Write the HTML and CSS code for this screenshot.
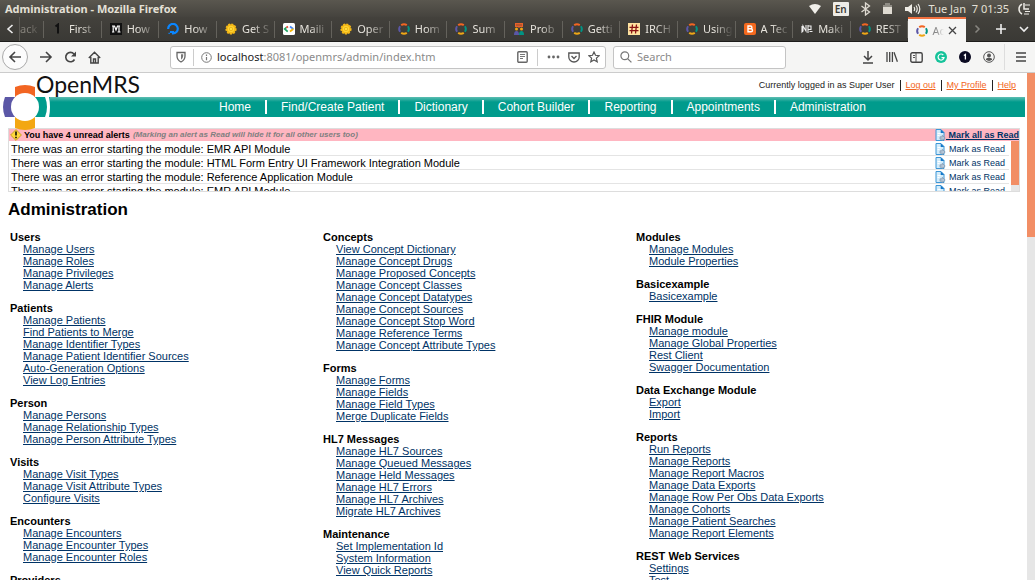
FILE: index.html
```html
<!DOCTYPE html>
<html lang="en">
<head>
<meta charset="utf-8">
<title>Administration - Mozilla Firefox</title>
<link rel="stylesheet" href="styles.css">
</head>
<body>
<svg class="defs" aria-hidden="true">
  <symbol id="omrs" viewBox="0 0 12 12"><g fill="none" stroke-width="2"><path d="M3.2 2.1Q6 .2 8.8 2.1" stroke="#f26522"/><path d="M9.9 3.2Q11.8 6 9.9 8.8" stroke="#009384"/><path d="M8.8 9.9Q6 11.8 3.2 9.9" stroke="#eea616"/><path d="M2.1 8.8Q.2 6 2.1 3.2" stroke="#5b57a6"/></g></symbol>
  <symbol id="sun" viewBox="0 0 12 12"><circle cx="6" cy="6" r="4.8" fill="#f5b918" stroke="#f5b918" stroke-width="1.6" stroke-dasharray="2 1.2"/><circle cx="6" cy="6" r="3" fill="#ffdf3d"/><circle cx="6" cy="6" r="1.8" fill="none" stroke="#e8a50c" stroke-width=".8"/></symbol>
  <symbol id="doc" viewBox="0 0 11 12"><path d="M1 .5h5l3 3v8H1z" fill="#d3ecfb" stroke="#3d96d6"/><path d="M5.700.3v3.700h3.700z" fill="#1478c8"/><path d="M2.500 4.500h3M2.500 6.500h2" stroke="#fff"/><path d="M5 7.800h2.200V6.300l3 2.700-3 2.700v-1.500H5z" fill="#b4c6d8" stroke="#7f94aa" stroke-width=".7"/></symbol>
</svg>

<header class="titlebar">
  <span class="window-title">Administration - Mozilla Firefox</span>
  <div class="tray">
    <svg width="14" height="12" viewBox="0 0 14 12"><path d="M1 3Q7-1 13 3L7 11z" fill="#f1efea"/></svg>
    <span class="lang">En</span>
    <svg width="11" height="14" viewBox="0 0 11 14"><path d="M1.5 4l8 6L5.5 13V1l4 3-8 6" fill="none" stroke="#dfdbd2" stroke-width="1.3"/></svg>
    <svg width="11" height="13" viewBox="0 0 11 13"><path d="M3 1h5v2h2v9H1V3h2z" fill="#8f8c84"/><path d="M1 5h9v7H1z" fill="#dfdbd2"/></svg>
    <svg width="17" height="12" viewBox="0 0 17 12"><path d="M1 4h3l4-3v10L4 8H1z" fill="#eeece6"/><path d="M10 4q1.4 2 0 4M12 2.5q2.5 3.500 0 7M14 1q3.600 5 0 10" fill="none" stroke="#eeece6" stroke-width="1.2"/></svg>
    <time>Tue Jan&nbsp; 7 01:35</time>
    <svg width="14" height="14" viewBox="0 0 14 14" fill="none" stroke="#eeece6" stroke-width="1.5"><path d="M5 2.200A5.500 5.500 0 0 0 5 12M7 1v6h5"/><path d="M8 3h5M8 9.500h5M7 12h5" stroke-width="1.200"/></svg>
  </div>
</header>

<nav class="tabs" aria-label="Tabs">
  <button class="scroll" aria-label="Scroll left"><svg width="8" height="10" viewBox="0 0 8 10"><path d="M6.500 1L2 5l4.500 4" fill="none" stroke="#eee" stroke-width="1.600"/></svg></button>
  <button class="tab cut"><span>ack</span></button>
  <button class="tab"><svg width="12" height="12" viewBox="0 0 12 12"><path d="M3.500 3.500L6 1.500v9" fill="none" stroke="#111" stroke-width="2"/></svg><span>First</span></button>
  <button class="tab"><svg width="12" height="12" viewBox="0 0 12 12"><path d="M0 0h12v12H0z" fill="#111"/><path d="M2 3h2.500L6 7l1.500-4H10M3.200 3v6M9 3v6M2 9h2.400M7.500 9h3" fill="none" stroke="#fff" stroke-width="1.200"/></svg><span>How</span></button>
  <button class="tab"><svg width="12" height="12" viewBox="0 0 12 12"><path d="M1.200 6A4.800 4.800 0 1 1 6 10.500V8" fill="none" stroke="#0a86ff" stroke-width="2.200"/><path d="M3 8h2v2H3zM1.500 9.800h1.300v1.300H1.500z" fill="#0a86ff"/></svg><span>How</span></button>
  <button class="tab"><svg width="12" height="12"><use href="#sun"/></svg><span>Get S</span></button>
  <button class="tab"><svg width="12" height="12" viewBox="0 0 12 12"><rect width="12" height="12" rx="1.500" fill="#fff"/><g fill="none" stroke-width="1.700"><path d="M5 3.500L3.200 4.800" stroke="#e54c37"/><path d="M3.200 4.500L1.700 6l3 2.600" stroke="#1aa260"/><path d="M7 3.500L10.300 6" stroke="#4285f4"/><path d="M10.300 6L7 8.500" stroke="#f4b400"/></g></svg><span>Maili</span></button>
  <button class="tab"><svg width="12" height="12"><use href="#sun"/></svg><span>Oper</span></button>
  <button class="tab"><svg width="12" height="12"><use href="#omrs"/></svg><span>Hom</span></button>
  <button class="tab"><svg width="12" height="12"><use href="#omrs"/></svg><span>Sum</span></button>
  <button class="tab"><svg width="12" height="12" viewBox="0 0 12 12"><path d="M2 0h8v4H7L6 5 5 4H2z" fill="#e8622b"/><path d="M3.500 2h1M5.500 2h1M7.500 2h1" stroke="#333"/><circle cx="3.500" cy="6" r="1.500" fill="#eea616"/><circle cx="8.500" cy="6" r="1.500" fill="#eea616"/><path d="M1 12q0-4 2.500-4T6 12z" fill="#5b57a6"/><path d="M6 12q0-4 2.500-4t2.500 4z" fill="#009384"/></svg><span>Prob</span></button>
  <button class="tab"><svg width="12" height="12"><use href="#omrs"/></svg><span>Getti</span></button>
  <button class="tab"><svg width="12" height="12" viewBox="0 0 12 12"><path d="M0 0h12v12H0z" fill="#ffe3a0"/><path d="M4.500 1.500l-1 9M8.500 1.500l-1 9M1.500 4.300h9M1.500 7.700h9" stroke="#8a1212" stroke-width="1.300"/></svg><span>IRCH</span></button>
  <button class="tab"><svg width="12" height="12"><use href="#omrs"/></svg><span>Using</span></button>
  <button class="tab"><svg width="12" height="12" viewBox="0 0 12 12"><rect width="12" height="12" rx="2" fill="#f4691e"/><path d="M4 3h2.500a1.400 1.400 0 0 1 0 2.800H4zM4 5.800h3a1.500 1.500 0 0 1 0 3H4z" fill="none" stroke="#fff" stroke-width="1.400"/></svg><span>A Tec</span></button>
  <button class="tab"><svg width="12" height="12" viewBox="0 0 12 12"><path d="M1 3v6l1-1V3l3 5V2M7 2v8M7 3h3v3.500H7M8.500 8.500h3" fill="none" stroke="#eee" stroke-width="1.100"/></svg><span>Maki</span></button>
  <button class="tab"><svg width="12" height="12"><use href="#omrs"/></svg><span>REST</span></button>
  <div class="tab active"><svg width="12" height="12"><use href="#omrs"/></svg><span>Ad</span><button class="close" aria-label="Close tab"><svg width="9" height="9" viewBox="0 0 9 9"><path d="M1 1l7 7M8 1L1 8" stroke="#444" stroke-width="1.300"/></svg></button></div>
  <button class="tool" aria-label="Scroll right"><svg width="7" height="10" viewBox="0 0 7 10"><path d="M1.500 1.500L5 5 1.500 8.500" fill="none" stroke="#888680" stroke-width="1.500"/></svg></button>
  <button class="tool" aria-label="New tab"><svg width="12" height="12" viewBox="0 0 12 12"><path d="M6 1v10M1 6h10" stroke="#eee" stroke-width="1.600"/></svg></button>
  <button class="tool" aria-label="List all tabs"><svg width="10" height="8" viewBox="0 0 10 8"><path d="M1 2l4 4 4-4" fill="none" stroke="#eee" stroke-width="1.600"/></svg></button>
</nav>

<div class="toolbar">
  <div class="history">
    <button class="back" aria-label="Back"><svg width="14" height="12" viewBox="0 0 14 12"><path d="M13 6H2M7 1L2 6l5 5" fill="none" stroke="#444" stroke-width="1.600"/></svg></button>
    <button aria-label="Forward"><svg width="14" height="12" viewBox="0 0 14 12"><path d="M1 6h11M7 1l5 5-5 5" fill="none" stroke="#444" stroke-width="1.600"/></svg></button>
    <button aria-label="Reload"><svg width="13" height="12" viewBox="0 0 13 12"><path d="M10.500 8.500A4.700 4.700 0 1 1 10 3" fill="none" stroke="#444" stroke-width="1.600"/><path d="M12 .5v5H7z" fill="#444"/></svg></button>
    <button aria-label="Home"><svg width="13" height="13" viewBox="0 0 13 13"><path d="M.8 7L6.500 1.300 12.200 7M2.800 6v6h7.400V6M5.500 12V8h2v4" fill="none" stroke="#444" stroke-width="1.400"/></svg></button>
  </div>
  <div class="urlbar">
    <svg width="10" height="12" viewBox="0 0 10 12"><path d="M1 1.500h8V5q0 4-4 6-4-2-4-6z" fill="none" stroke="#666" stroke-width="1.300"/><path d="M5 3.300h2.200V5q0 2.300-2.200 3.700z" fill="#777"/></svg>
    <i class="rule"></i>
    <svg width="11" height="11" viewBox="0 0 11 11"><circle cx="5.500" cy="5.500" r="4.800" fill="none" stroke="#777"/><path d="M5.500 5v3.200M5.500 2.600v1.300" stroke="#777" stroke-width="1.200"/></svg>
    <a class="address" href="#"><b>localhost</b>:8081/openmrs/admin/index.htm</a>
    <svg width="11" height="12" viewBox="0 0 11 12"><rect x=".8" y=".8" width="9.400" height="10.400" rx="1" fill="none" stroke="#666" stroke-width="1.400"/><path d="M3 3.500h5M3 5.500h5M3 7.500h3" stroke="#777"/></svg>
    <i class="rule wide"></i>
    <svg width="13" height="4" viewBox="0 0 13 4" fill="#666"><circle cx="2" cy="2" r="1.400"/><circle cx="6.500" cy="2" r="1.400"/><circle cx="11" cy="2" r="1.400"/></svg>
    <svg width="12" height="11" viewBox="0 0 12 11" fill="none" stroke="#555" stroke-width="1.300"><path d="M.8 1h10.400v4a5.200 5 0 0 1-10.400 0z"/><path d="M3.500 4L6 6.500 8.500 4"/></svg>
    <svg width="12" height="12" viewBox="0 0 12 12"><path d="M6 1l1.500 3.300 3.600.4-2.700 2.400.8 3.600L6 8.900l-3.200 1.800.8-3.600L.9 4.700l3.600-.4z" fill="none" stroke="#555" stroke-width="1.200"/></svg>
  </div>
  <label class="search">
    <svg width="12" height="12" viewBox="0 0 12 12"><circle cx="4.800" cy="4.800" r="3.900" fill="none" stroke="#777" stroke-width="1.200"/><path d="M7.600 7.600l3.800 3.800" stroke="#777" stroke-width="1.300"/></svg>
    <input type="text" placeholder="Search" aria-label="Search">
  </label>
  <div class="actions">
    <button aria-label="Downloads"><svg width="12" height="13" viewBox="0 0 12 13"><path d="M6 0v9M2 5l4 4 4-4M1 12h10" fill="none" stroke="#444" stroke-width="1.500"/></svg></button>
    <button aria-label="Library"><svg width="12" height="12" viewBox="0 0 12 12"><path d="M1 1v10M3.700 1v10M6.400 1v10M8 1.200l3.400 9.600" fill="none" stroke="#444" stroke-width="1.300"/></svg></button>
    <button aria-label="Sidebars"><svg width="13" height="11" viewBox="0 0 13 11"><rect x=".8" y=".8" width="11.400" height="9.400" rx="1.500" fill="none" stroke="#444" stroke-width="1.400"/><path d="M6 1v9M3 3.500h2M3 5.500h2" stroke="#555"/></svg></button>
    <button aria-label="Grammar checker"><svg width="12" height="12" viewBox="0 0 12 12"><circle cx="6" cy="6" r="6" fill="#15c39a"/><path d="M8.300 4A3 3 0 1 0 9 6.700H6.500" fill="none" stroke="#fff" stroke-width="1.200"/></svg></button>
    <button aria-label="Extension"><svg width="12" height="12" viewBox="0 0 12 12"><circle cx="6" cy="6" r="6" fill="#0b0b22"/><path d="M4.800 4.500L6.400 3.500v5" fill="none" stroke="#fff" stroke-width="1.300"/></svg></button>
    <button aria-label="Account"><svg width="12" height="12" viewBox="0 0 12 12"><circle cx="6" cy="6" r="5.300" fill="none" stroke="#555"/><circle cx="6" cy="4.500" r="2" fill="#555"/><path d="M2.800 8.800q0-2 3.200-2t3.200 2Q6 11 2.800 8.800" fill="#555"/></svg></button>
    <button class="menu" aria-label="Menu"><svg width="10" height="10" viewBox="0 0 10 10"><path d="M0 1h10M0 5h10M0 9h10" stroke="#444" stroke-width="1.500"/></svg></button>
  </div>
</div>

<div class="viewport">
<main class="page">
  <div class="banner">
    <nav class="mainnav" aria-label="Main"><a href="#">Home</a><a href="#">Find/Create Patient</a><a href="#">Dictionary</a><a href="#">Cohort Builder</a><a href="#">Reporting</a><a href="#">Appointments</a><a href="#">Administration</a></nav>
    <div class="brand">
      <svg class="mark" width="50" height="50" viewBox="0 0 50 50"><path d="M0 14h50v22H0z" fill="#fff"/><path d="M15 5q10-4 20 0v12H15z" fill="#f26522"/><path d="M15 34h20v12q-10 4-20 0z" fill="#f3a712"/><path d="M5 15h10v20H5q-4-10 0-20z" fill="#5b57a6"/><path d="M35 15h10q4 10 0 20H35z" fill="#009b8c"/><path d="M49 15h1v20h-1q2-10 0-20z" fill="#009b8c"/><circle cx="25" cy="25" r="14" fill="#fff"/></svg>
      <span class="wordmark">OpenMRS</span>
    </div>
    <div class="userbar"><span>Currently logged in as Super User</span><a href="#">Log out</a><a href="#">My Profile</a><a href="#">Help</a></div>
  </div>

  <section class="alerts">
    <div class="alerts-head">
      <svg width="12" height="12" viewBox="0 0 12 12"><path d="M6 .6L11.400 6 6 11.400.6 6z" fill="#ffd83b" stroke="#c9a227"/><path d="M6 2.500v4M6 7.700v1.500" stroke="#000" stroke-width="1.500"/></svg>
      <strong>You have 4 unread alerts</strong><em>(Marking an alert as Read will hide it for all other users too)</em>
      <a href="#"><svg width="11" height="12"><use href="#doc"/></svg> Mark all as Read</a>
    </div>
    <div class="alerts-body">
      <ul class="alert-list">
        <li><span>There was an error starting the module: EMR API Module</span><a href="#"><svg width="11" height="12"><use href="#doc"/></svg>Mark as Read</a></li>
        <li><span>There was an error starting the module: HTML Form Entry UI Framework Integration Module</span><a href="#"><svg width="11" height="12"><use href="#doc"/></svg>Mark as Read</a></li>
        <li><span>There was an error starting the module: Reference Application Module</span><a href="#"><svg width="11" height="12"><use href="#doc"/></svg>Mark as Read</a></li>
        <li><span>There was an error starting the module: EMR API Module</span><a href="#"><svg width="11" height="12"><use href="#doc"/></svg>Mark as Read</a></li>
      </ul>
      <div class="track"><div class="thumb small"></div></div>
    </div>
  </section>

  <h1>Administration</h1>
  <div class="columns">
    <div class="column">
      <section><h2>Users</h2><ul><li><a href="#">Manage Users</a></li><li><a href="#">Manage Roles</a></li><li><a href="#">Manage Privileges</a></li><li><a href="#">Manage Alerts</a></li></ul></section>
      <section><h2>Patients</h2><ul><li><a href="#">Manage Patients</a></li><li><a href="#">Find Patients to Merge</a></li><li><a href="#">Manage Identifier Types</a></li><li><a href="#">Manage Patient Identifier Sources</a></li><li><a href="#">Auto-Generation Options</a></li><li><a href="#">View Log Entries</a></li></ul></section>
      <section><h2>Person</h2><ul><li><a href="#">Manage Persons</a></li><li><a href="#">Manage Relationship Types</a></li><li><a href="#">Manage Person Attribute Types</a></li></ul></section>
      <section><h2>Visits</h2><ul><li><a href="#">Manage Visit Types</a></li><li><a href="#">Manage Visit Attribute Types</a></li><li><a href="#">Configure Visits</a></li></ul></section>
      <section><h2>Encounters</h2><ul><li><a href="#">Manage Encounters</a></li><li><a href="#">Manage Encounter Types</a></li><li><a href="#">Manage Encounter Roles</a></li></ul></section>
      <section><h2>Providers</h2></section>
    </div>
    <div class="column">
      <section><h2>Concepts</h2><ul><li><a href="#">View Concept Dictionary</a></li><li><a href="#">Manage Concept Drugs</a></li><li><a href="#">Manage Proposed Concepts</a></li><li><a href="#">Manage Concept Classes</a></li><li><a href="#">Manage Concept Datatypes</a></li><li><a href="#">Manage Concept Sources</a></li><li><a href="#">Manage Concept Stop Word</a></li><li><a href="#">Manage Reference Terms</a></li><li><a href="#">Manage Concept Attribute Types</a></li></ul></section>
      <section><h2>Forms</h2><ul><li><a href="#">Manage Forms</a></li><li><a href="#">Manage Fields</a></li><li><a href="#">Manage Field Types</a></li><li><a href="#">Merge Duplicate Fields</a></li></ul></section>
      <section><h2>HL7 Messages</h2><ul><li><a href="#">Manage HL7 Sources</a></li><li><a href="#">Manage Queued Messages</a></li><li><a href="#">Manage Held Messages</a></li><li><a href="#">Manage HL7 Errors</a></li><li><a href="#">Manage HL7 Archives</a></li><li><a href="#">Migrate HL7 Archives</a></li></ul></section>
      <section><h2>Maintenance</h2><ul><li><a href="#">Set Implementation Id</a></li><li><a href="#">System Information</a></li><li><a href="#">View Quick Reports</a></li></ul></section>
    </div>
    <div class="column">
      <section><h2>Modules</h2><ul><li><a href="#">Manage Modules</a></li><li><a href="#">Module Properties</a></li></ul></section>
      <section><h2>Basicexample</h2><ul><li><a href="#">Basicexample</a></li></ul></section>
      <section><h2>FHIR Module</h2><ul><li><a href="#">Manage module</a></li><li><a href="#">Manage Global Properties</a></li><li><a href="#">Rest Client</a></li><li><a href="#">Swagger Documentation</a></li></ul></section>
      <section><h2>Data Exchange Module</h2><ul><li><a href="#">Export</a></li><li><a href="#">Import</a></li></ul></section>
      <section><h2>Reports</h2><ul><li><a href="#">Run Reports</a></li><li><a href="#">Manage Reports</a></li><li><a href="#">Manage Report Macros</a></li><li><a href="#">Manage Data Exports</a></li><li><a href="#">Manage Row Per Obs Data Exports</a></li><li><a href="#">Manage Cohorts</a></li><li><a href="#">Manage Patient Searches</a></li><li><a href="#">Manage Report Elements</a></li></ul></section>
      <section><h2>REST Web Services</h2><ul><li><a href="#">Settings</a></li><li><a href="#">Test</a></li></ul></section>
    </div>
  </div>
</main>
<div class="track"><div class="thumb"></div></div>
</div>
</body>
</html>
```
FILE: styles.css
```css
* { box-sizing: border-box; }
body { margin: 0; height: 100vh; overflow: hidden; display: flex; flex-direction: column; background: #fff; font-family: "Liberation Sans", Arial, sans-serif; font-size: 11px; line-height: 12px; color: #000; }
button, input { font: inherit; color: inherit; border: 0; padding: 0; margin: 0; background: none; }
ul { list-style: none; margin: 0; padding: 0; }
svg { display: block; flex: none; }
.defs { position: absolute; width: 0; height: 0; }
a { color: #003366; }

.titlebar, .tabs, .toolbar { flex: none; font-family: "Noto Sans", "Open Sans", sans-serif; font-size: 11px; line-height: 16px; }
.titlebar { display: flex; align-items: center; justify-content: space-between; height: 17px; padding: 0 4px 0 5px; background: linear-gradient(#5a574f, #45433e); color: #e4e0d6; }
.window-title { font-weight: 700; }
.tray { display: flex; align-items: center; gap: 11px; }
.lang { background: #eeece6; color: #3c3b37; border-radius: 1px; padding: 0 2px; font-size: 10px; line-height: 14px; font-weight: 600; }
.tray time { margin: 0 -3px; }

.tabs { display: flex; height: 25px; background: linear-gradient(#43413c, #3a3935); border-bottom: 1px solid #1d1c1a; color: #e6e3dc; }
.tabs button { display: flex; align-items: center; justify-content: center; }
.scroll { width: 20px; border-right: 1px solid #5b5954; }
.tabs .tab { display: flex; align-items: center; justify-content: flex-start; gap: 5px; flex: 1 1 0; min-width: 0; padding: 0 3px 0 8px; position: relative; }
.tabs .tab::after { content: ""; position: absolute; right: 0; top: 4px; bottom: 3px; width: 1px; background: #64625c; }
.tab span { flex: 1; min-width: 0; white-space: nowrap; text-align: left; -webkit-mask-image: linear-gradient(90deg, #000 35%, transparent); mask-image: linear-gradient(90deg, #000 35%, transparent); }
.tabs .cut { flex: 0 0 24px; padding: 0 2px 0 0; color: #85827b; }
.tabs .active { background: #f5f5f4; border-top: 2px solid #f0703f; color: #888; height: 25px; gap: 4px; }
.tabs .close { margin-right: 6px; }
.tabs .active::after { display: none; }
.tabs .tool { flex: 0 0 23px; }

.toolbar { display: flex; align-items: center; height: 31px; padding: 0 9px 0 2px; background: #f5f5f4; border-bottom: 1px solid #ccc; }
.history { display: flex; align-items: center; gap: 11px; width: 168px; }
.back { width: 26px; height: 26px; border: 1px solid #aaa; border-radius: 50%; background: #fcfcfc; display: grid; place-items: center; }
.urlbar, .search { display: flex; align-items: center; gap: 8px; height: 23px; background: #fff; border: 1px solid #c4c4c4; border-radius: 3px; }
.urlbar { flex: 8 1 0; padding: 0 5px; }
.rule { width: 1px; height: 17px; background: #ccc; margin: 0 -1px; }
.rule.wide { margin: 0 1px; }
.address { flex: 1; color: #8a8a8a; text-decoration: none; white-space: nowrap; margin-left: -3px; }
.address b { font-weight: 400; color: #222; }
.search { flex: 3 1 0; margin-left: 7px; padding: 0 6px; gap: 5px; }
.search input { width: 100%; min-width: 0; outline: 0; }
.search input::placeholder { color: #8a8a8a; opacity: 1; }
.actions { display: flex; align-items: center; gap: 12px; margin-left: 76px; }
.actions .menu { height: 26px; border-left: 1px solid #ddd; padding-left: 11px; margin-left: -3px; }

.viewport { flex: 1; min-height: 0; display: flex; overflow: hidden; }
.page { flex: 1; min-width: 0; padding: 0 8px; }
.track { background: #e6e6e6; width: 8px; flex: none; }
.thumb { height: 164px; background: #f28e65; }
.thumb.small { height: 44px; }

.banner { position: relative; padding-top: 24px; margin-right: -6px; }
.brand { position: absolute; left: -8px; top: 0; display: flex; }
.mark { margin-top: 9px; }
.wordmark { font-family: Lato, sans-serif; font-size: 23px; line-height: 23px; color: #111; margin-left: -14px; }
.userbar { position: absolute; right: 9px; top: 7px; display: flex; font-size: 9px; line-height: 11px; color: #222; }
.userbar a { color: #f26522; border-left: 1px solid #222; margin-left: 6px; padding-left: 4px; }
.mainnav { display: flex; align-items: center; height: 20px; padding-left: 211px; background: linear-gradient(#5dbdb2, #009b8c 5px); font-size: 12px; line-height: 14px; }
.mainnav a { color: #fff; text-decoration: none; padding-right: 14px; margin-right: 14px; border-right: 2px solid #fff; white-space: nowrap; }
.mainnav a:last-child { border: 0; }

.alerts { margin: 11px -1px 0 0; border: 1px solid #ddd; }
.alerts-head { display: flex; align-items: center; height: 12px; padding-left: 1px; background: #ffb6c1; font-size: 9px; line-height: 12px; }
.alerts-head strong { margin-left: 2px; }
.alerts-head em { margin-left: 3px; color: #808080; font-size: 8px; font-weight: 700; }
.alerts-head a { margin-left: auto; display: flex; font-weight: 700; white-space: pre; }
.alerts-body { display: flex; height: 50px; overflow: hidden; }
.alert-list { flex: 1; padding: 1px 2px; }
.alert-list li { display: flex; justify-content: space-between; align-items: center; height: 14px; padding: 0 4px 0 0; border-bottom: 1px solid #e4e4e4; }
.alert-list a { display: flex; align-items: center; gap: 3px; font-size: 9px; text-decoration: none; }

h1 { margin: 8px 0 11px; font-size: 17px; line-height: 20px; }
h2 { margin: 0; font-size: 11px; line-height: 12px; }
.columns { display: grid; grid-template-columns: repeat(3, 1fr); padding: 0 70px 0 2px; }
.column { display: flex; flex-direction: column; gap: 11px; }
.column ul { padding-left: 13px; }
```
